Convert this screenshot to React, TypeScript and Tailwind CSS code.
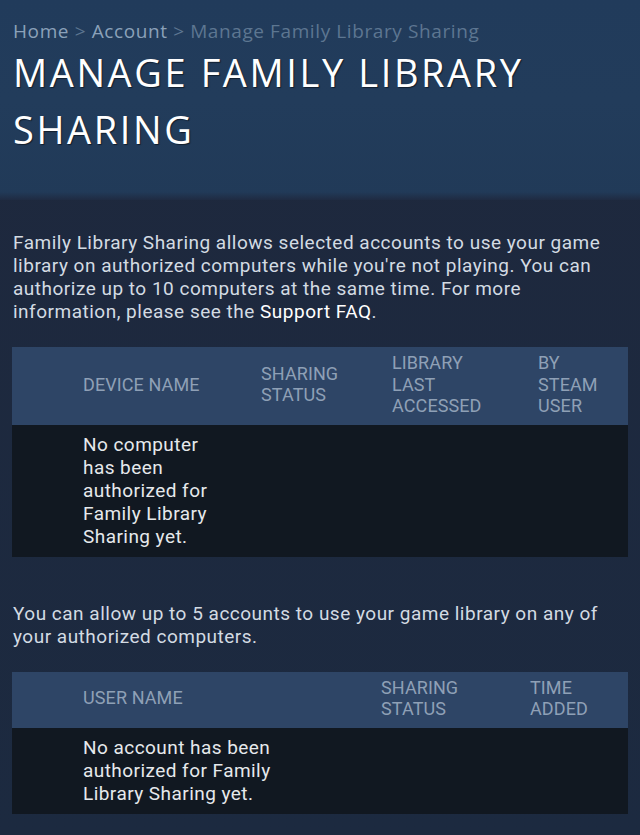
import React from "react";

const headerCell = "text-[18px] leading-[21.5px] tracking-[0.1px] text-[#8fa0b6] uppercase";

type Col = { label: string[]; width: string };

const DataTable = ({
  cols,
  empty,
  emptyWidth,
}: {
  cols: Col[];
  empty: string;
  emptyWidth: string;
}) => {
  return (
    <div className="mx-3 w-[616px]">
      <div className="flex items-center bg-[#2e4566] pt-[5px] pb-[8px]">
        <div className="w-[71px] shrink-0" />
        {cols.map((c) => (
          <div key={c.label.join(" ")} className={`${c.width} shrink-0 ${headerCell}`}>
            {c.label.map((l) => (
              <div key={l}>{l}</div>
            ))}
          </div>
        ))}
      </div>
      <div className="flex bg-[#111821] pt-[8px] pb-[9px]">
        <div className="w-[71px] shrink-0" />
        <div className={`${emptyWidth} text-[19px] leading-[23px] tracking-[0.45px] text-[#e6e9ec]`}>
          {empty}
        </div>
      </div>
    </div>
  );
};

export default function App() {
  return (
    <div
      className="w-[640px] min-h-[835px] bg-gradient-to-b from-[#1e283d] to-[#1c2a40]"
      style={{ fontFamily: "Roboto, 'Liberation Sans', sans-serif" }}
    >
      {/* page header with breadcrumbs */}
      <div className="h-[200px] bg-gradient-to-b from-[#213b5b] via-[#223c5b] to-[#213a58] px-[13px] pt-[17px] relative">
        <div
          className="text-[19px] leading-[28px] tracking-[0.6px]"
          style={{ fontFamily: "'Open Sans', 'DejaVu Sans', sans-serif" }}
        >
          <span className="text-[#8ba1b9]">Home</span>
          <span className="text-[#5d7691]"> &gt; </span>
          <span className="text-[#8ba1b9]">Account</span>
          <span className="text-[#5d7691]"> &gt; Manage Family Library Sharing</span>
        </div>
        <h1
          className="-mt-[1px] text-[38px] leading-[57px] tracking-[2.6px] text-white [text-shadow:1px_1px_1px_rgba(0,0,0,0.5)]"
          style={{ fontFamily: "'Open Sans', 'DejaVu Sans', sans-serif" }}
        >
          MANAGE FAMILY LIBRARY SHARING
        </h1>
        <div className="absolute left-0 right-0 bottom-0 h-[8px] bg-gradient-to-b from-transparent to-[#1f2b42]" />
      </div>

      <p className="px-[13px] pt-[31px] text-[19px] leading-[23px] tracking-[0.5px] text-[#d3dbe3]">
        Family Library Sharing allows selected accounts to use your game library on authorized computers
        while you're not playing. You can authorize up to 10 computers at the same time. For more
        information, please see the <span className="text-white">Support FAQ</span>.
      </p>

      <div className="mt-[24px]">
        <DataTable
          cols={[
            { label: ["Device Name"], width: "w-[178px]" },
            { label: ["Sharing", "Status"], width: "w-[131px]" },
            { label: ["Library", "Last", "Accessed"], width: "w-[146px]" },
            { label: ["By", "Steam", "User"], width: "w-[90px]" },
          ]}
          empty="No computer has been authorized for Family Library Sharing yet."
          emptyWidth="w-[138px]"
        />
      </div>

      <p className="px-[13px] pt-[45px] text-[19px] leading-[23px] tracking-[0.5px] text-[#d3dbe3]">
        You can allow up to 5 accounts to use your game library on any of your authorized computers.
      </p>

      <div className="mt-[24px]">
        <DataTable
          cols={[
            { label: ["User Name"], width: "w-[298px]" },
            { label: ["Sharing", "Status"], width: "w-[149px]" },
            { label: ["Time", "Added"], width: "w-[98px]" },
          ]}
          empty="No account has been authorized for Family Library Sharing yet."
          emptyWidth="w-[200px]"
        />
      </div>
    </div>
  );
}
